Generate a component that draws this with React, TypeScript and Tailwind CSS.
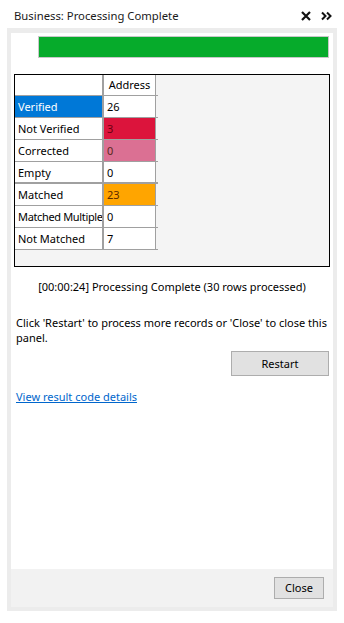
import React from "react";

const rows1 = [
  { label: "Verified", value: "26", head: "bg-[#0078d7] text-white", cell: "bg-white text-black" },
  { label: "Not Verified", value: "3", head: "bg-white text-black", cell: "bg-[#dc143c] text-[#6b0010]" },
  { label: "Corrected", value: "0", head: "bg-white text-black", cell: "bg-[#db7093] text-[#5a2a1a]" },
  { label: "Empty", value: "0", head: "bg-white text-black", cell: "bg-white text-black" },
];

const rows2 = [
  { label: "Matched", value: "23", head: "bg-white text-black", cell: "bg-[#ffa500] text-[#5a2a00]" },
  { label: "Matched Multiple", value: "0", head: "bg-white text-black tracking-[-0.35px]", cell: "bg-white text-black" },
  { label: "Not Matched", value: "7", head: "bg-white text-black", cell: "bg-white text-black" },
];

function Row({ r, last }: { r: (typeof rows1)[number]; last?: boolean }) {
  return (
    <div className={`flex h-[22px] ${last ? "border-b-2" : "border-b"} border-[#a0a0a0]`}>
      <div
        className={`w-[89px] border-r-2 border-[#a0a0a0] pl-[3px] leading-[21px] whitespace-nowrap overflow-hidden ${r.head}`}
      >
        {r.label}
      </div>
      <div className={`w-[52px] border-r border-[#a0a0a0] pl-[3px] leading-[21px] ${r.cell}`}>{r.value}</div>
    </div>
  );
}

export default function App() {
  return (
    <div
      className="w-[344px] h-[623px] bg-white text-[11px] text-black overflow-hidden"
      style={{ fontFamily: '"Noto Sans", "Open Sans", sans-serif' }}
    >
      <div className="h-[28px] flex items-center justify-between pl-[14px] pr-[12px] pt-[4px]">
        <span className="text-[11.3px] text-[#1a1a1a]">Business: Processing Complete</span>
        <div className="flex items-center gap-[10px]">
          <svg width="10" height="10" viewBox="0 0 10 10">
            <path d="M1 1 L9 9 M9 1 L1 9" stroke="#111" strokeWidth="2.2" />
          </svg>
          <svg width="11" height="10" viewBox="0 0 11 10">
            <path d="M1 1.5 L4.5 5 L1 8.5 M6 1.5 L9.5 5 L6 8.5" stroke="#111" strokeWidth="2" fill="none" />
          </svg>
        </div>
      </div>

      <div className="mx-[7px] bg-[#ececec] pt-[5px] px-[4px] pb-[4px]">
        <div className="bg-white h-[536px] flex flex-col">
          <div className="mt-[3px] ml-[27px] w-[291px] h-[22px] border border-[#c8c8c8] bg-[#06ab2b]" />

          <div className="mt-[16px] mx-[3px] h-[193px] border border-black bg-[#f4f4f4]">
            <div className="w-[143px]">
              <div className="flex h-[21px] border-b border-[#a0a0a0]">
                <div className="w-[89px] bg-white border-r-2 border-[#a0a0a0]" />
                <div className="w-[52px] bg-white border-r border-[#a0a0a0] text-center leading-[20px]">Address</div>
              </div>
              {rows1.map((r, i) => (
                <Row key={r.label} r={r} last={i === rows1.length - 1} />
              ))}
              {rows2.map((r) => (
                <Row key={r.label} r={r} />
              ))}
            </div>
          </div>

          <div className="mt-[12px] text-center leading-[16px]">
            [00:00:24] Processing Complete (30 rows processed)
          </div>

          <p className="mt-[20px] px-[5px] leading-[15px]">
            Click 'Restart' to process more records or 'Close' to close this panel.
          </p>

          <div className="flex justify-end pr-[4px] mt-[6px]">
            <button className="w-[98px] h-[25px] bg-[#e1e1e1] border border-[#adadad] leading-[23px]">Restart</button>
          </div>

          <a href="#" className="mt-[13px] ml-[5px] self-start text-[#0066cc] underline leading-[15px]">
            View result code details
          </a>
        </div>

        <div className="h-[38px] bg-[#f2f2f2] flex items-center justify-end pr-[9px]">
          <button className="w-[50px] h-[22px] bg-[#e1e1e1] border border-[#adadad] leading-[20px]">Close</button>
        </div>
      </div>
    </div>
  );
}
